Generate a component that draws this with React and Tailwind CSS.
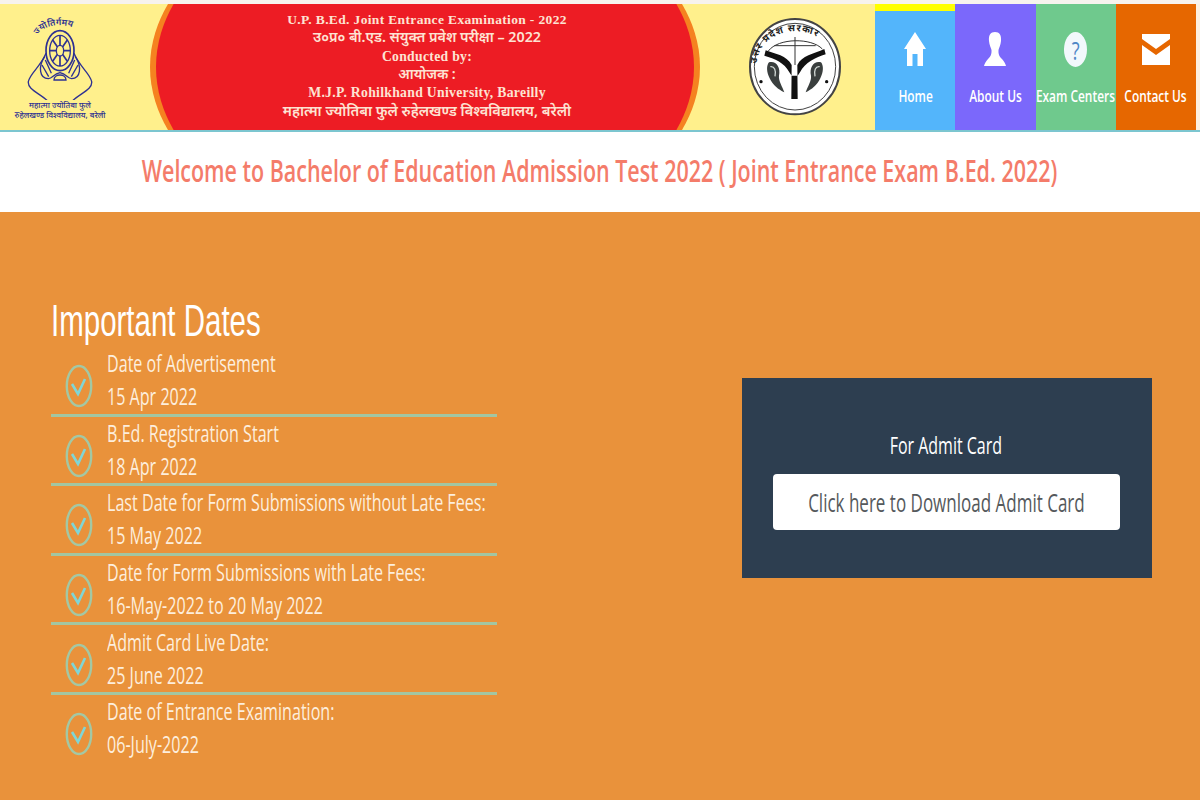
import React from 'react';

const DATES = [
  ['Date of Advertisement', '15 Apr 2022'],
  ['B.Ed. Registration Start', '18 Apr 2022'],
  ['Last Date for Form Submissions without Late Fees:', '15 May 2022'],
  ['Date for Form Submissions with Late Fees:', '16-May-2022 to 20 May 2022'],
  ['Admit Card Live Date:', '25 June 2022'],
  ['Date of Entrance Examination:', '06-July-2022'],
];

function HomeIcon() {
  return (
    <svg width="22" height="35" viewBox="0 0 22 35" fill="#fff">
      <path d="M11 0 L22 17 H19 V34 H13.5 V22 H8.5 V34 H3 V17 H0 Z" />
    </svg>
  );
}

function UserIcon() {
  return (
    <svg width="22" height="35" viewBox="0 0 22 35" fill="#fff">
      <path d="M11 0 C15.5 0 17.5 3 17 9 C16.7 13 15 16 14.5 18 C14.3 22 15 24 18 27 C20 29 21.5 32 22 34 H0 C0.5 32 2 29 4 27 C7 24 7.7 22 7.5 18 C7 16 5.3 13 5 9 C4.5 3 6.5 0 11 0 Z" />
    </svg>
  );
}

function QuestionIcon() {
  return (
    <div className="w-[23px] h-[35px] rounded-[50%] bg-[#f2f8fc] flex items-center justify-center text-[#4f86c6] text-[26px] leading-none">
      <span className="scale-x-[0.7]">?</span>
    </div>
  );
}

function MailIcon() {
  return (
    <svg width="28" height="31" viewBox="0 0 28 31" fill="#fff">
      <path d="M0 0 H28 V5 L14 15 L0 5 Z" />
      <path d="M0 11 L14 21 L28 11 V31 H0 Z" />
    </svg>
  );
}

const MENU = [
  { label: 'Home', bg: 'bg-[#53b5fb]', icon: <HomeIcon />, active: true },
  { label: 'About Us', bg: 'bg-[#7b68fb]', icon: <UserIcon /> },
  { label: 'Exam Centers', bg: 'bg-[#6fc98d]', icon: <QuestionIcon /> },
  { label: 'Contact Us', bg: 'bg-[#e66700]', icon: <MailIcon /> },
];

function UniversityLogo() {
  return (
    <div className="w-[100px] h-full pt-[6px] flex flex-col items-center text-[#2e3192]">
      <svg width="100" height="90" viewBox="0 0 300 270" fill="none" stroke="#2e3192" className="shrink-0">
        <path id="logoArc" d="M84 78 C95 35 205 35 216 78" stroke="none" />
        <text fontSize="27" fontWeight="600" fill="#2e3192" stroke="none" fontFamily="'Noto Sans', sans-serif">
          <textPath href="#logoArc" startOffset="2%">ज्योतिर्गमय</textPath>
        </text>
        <ellipse cx="150" cy="122" rx="42" ry="60" strokeWidth="5" />
        <ellipse cx="150" cy="122" rx="31" ry="46" strokeWidth="4" />
        <path d="M150 76 V168 M119 122 H181 M128 90 L172 154 M172 90 L128 154" strokeWidth="5" />
        <ellipse cx="150" cy="122" rx="11" ry="16" fill="#fff08c" strokeWidth="4" />
        <path d="M108 130 C92 170 60 190 55 215 C52 240 92 250 115 275" strokeWidth="4" />
        <path d="M192 130 C208 170 240 190 245 215 C248 240 208 250 185 275" strokeWidth="4" />
        <path d="M104 140 C84 170 88 205 115 206 C128 206 130 192 150 188 C170 192 172 206 185 206 C212 205 216 170 196 140" strokeWidth="4" />
        <path d="M96 165 L116 200 M106 150 L124 190 M204 165 L184 200 M194 150 L176 190" strokeWidth="4" />
        <path d="M132 210 C132 190 168 190 168 210 Z" strokeWidth="4" />
      </svg>
      <div className="text-[8px] leading-[10px] font-medium font-['Noto_Sans','Liberation_Sans',sans-serif] text-center whitespace-nowrap">
        <div>महात्मा ज्योतिबा फुले</div>
        <div>रुहेलखण्ड विश्वविद्यालय, बरेली</div>
      </div>
    </div>
  );
}

function StateSeal() {
  return (
    <svg width="100" height="105" viewBox="0 0 300 315">
      <ellipse cx="150" cy="155" rx="135" ry="143" fill="#fff" stroke="#444" strokeWidth="6" />
      <ellipse cx="150" cy="155" rx="122" ry="130" fill="none" stroke="#444" strokeWidth="3" />
      <path id="sealArc" d="M35 150 C40 15 260 15 268 150" fill="none" />
      <text fontSize="29" fontWeight="700" letterSpacing="3" fill="#222" fontFamily="'Noto Sans', sans-serif">
        <textPath href="#sealArc" startOffset="1%">उत्तर प्रदेश सरकार</textPath>
      </text>
      <path d="M70 108 C100 68 200 68 232 102 M150 66 V150 M88 92 L212 92" fill="none" stroke="#333" strokeWidth="3" />
      <g fill="#3a3f3e">
        <path d="M72 142 C92 136 108 156 102 182 C100 198 112 214 118 232 C100 224 84 210 74 190 C64 170 64 152 72 142 Z" />
        <path d="M228 142 C208 136 192 156 198 182 C200 198 188 214 182 232 C200 224 216 210 226 190 C236 170 236 152 228 142 Z" />
      </g>
      <path d="M76 155 C88 153 94 166 90 184 M224 155 C212 153 206 166 210 184" fill="none" stroke="#cfd6d2" strokeWidth="4" />
      <path d="M62 106 C90 116 126 122 140 150 L139 252 H158 L157 150 C170 122 206 116 238 102 L242 118 C212 128 180 142 165 172 L158 182 H140 L133 172 C118 142 90 132 58 122 Z" fill="#111" />
      <circle cx="48" cy="200" r="5" fill="#111" />
      <circle cx="245" cy="200" r="5" fill="#111" />
    </svg>
  );
}

function Banner() {
  return (
    <div className="relative flex-1 h-full overflow-hidden bg-[#fff08c] flex items-start pl-[10px]">
      <UniversityLogo />
      <div className="absolute left-[150px] top-[-114px] w-[550px] h-[354px] rounded-[50%] bg-[#f58220]" />
      <div className="absolute left-[156px] top-[-114px] w-[538px] h-[354px] rounded-[50%] bg-[#ed1c24]" />
      <div className="absolute left-[267px] top-[7px] w-[320px] text-center text-[#fde3d3] font-bold leading-[18px] whitespace-nowrap font-['Liberation_Serif','Noto_Sans',serif]">
        <div className="text-[13.5px] tracking-[0.35px]">U.P. B.Ed. Joint Entrance Examination - 2022</div>
        <div className="mt-[-1px] text-[14.3px] font-['Noto_Sans',serif] font-semibold">उ०प्र० बी.एड. संयुक्त प्रवेश परीक्षा – 2022</div>
        <div className="mt-[2px] text-[13.7px] tracking-[0.3px]">Conducted by:</div>
        <div className="mt-[-1px] text-[14px] font-['Noto_Sans',serif] font-semibold">आयोजक :</div>
        <div className="mt-[1px] text-[13.7px] tracking-[0.3px]">M.J.P. Rohilkhand University, Bareilly</div>
        <div className="mt-[-1px] text-[14.5px] font-['Noto_Sans',serif] font-semibold">महात्मा ज्योतिबा फुले रुहेलखण्ड विश्वविद्यालय, बरेली</div>
      </div>
      <div className="absolute left-[745px] top-[11px]">
        <StateSeal />
      </div>
    </div>
  );
}

function Menu() {
  return (
    <nav className="flex h-full shrink-0 mr-[4px]">
      {MENU.map((m) => (
        <a
          key={m.label}
          className={`w-[80.25px] h-full flex flex-col items-center ${m.bg} ${m.active ? 'border-t-[7px] border-[#ffff00] pt-[21px]' : 'pt-[28px]'}`}
        >
          <div className="h-[35px] flex items-center justify-center">{m.icon}</div>
          <span className="mt-[17px] text-white text-[17px] leading-[24px] font-semibold whitespace-nowrap scale-x-[0.7]">
            {m.label}
          </span>
        </a>
      ))}
    </nav>
  );
}

function CheckCircle() {
  return (
    <svg width="28" height="44" viewBox="0 0 28 44" fill="none" className="shrink-0 mt-[12px]">
      <ellipse cx="14" cy="22" rx="12.2" ry="20" stroke="#a3c8a4" strokeWidth="2.4" />
      <path d="M7 20 L13 30 L20 15" stroke="#7fd6d6" strokeWidth="2.6" />
    </svg>
  );
}

function DateRow({ title, date, last }) {
  return (
    <li className={`h-[69.6px] flex items-center pl-[14px] border-b-[3px] ${last ? 'border-transparent' : 'border-[#a2c6a2]'}`}>
      <CheckCircle />
      <div className="ml-[14px] text-[#fdeedd] text-[23px] leading-[33px] whitespace-nowrap">
        <div className="origin-left scale-x-[0.7]">{title}</div>
        <div className="origin-left scale-x-[0.7]">{date}</div>
      </div>
    </li>
  );
}

export default function App() {
  return (
    <div className="w-[1200px] h-[800px] overflow-hidden bg-white font-['Open_Sans',sans-serif]">
      <div className="h-[4px] bg-[#f7f3ee]" />
      <header className="h-[128px] flex bg-[#fdf0e0] border-b-[2px] border-[#7cc6d0]">
        <Banner />
        <Menu />
      </header>
      <div className="h-[80px] pb-[4px] flex items-center justify-center bg-white">
        <h2 className="text-[#f47c6a] text-[31px] font-semibold leading-none whitespace-nowrap scale-x-[0.692]">
          Welcome to Bachelor of Education Admission Test 2022 ( Joint Entrance Exam B.Ed. 2022)
        </h2>
      </div>
      <main className="h-[588px] bg-[#e9923b] flex items-start pl-[51px]">
        <section className="w-[446px] pt-[82px]">
          <h1 className="text-white text-[44px] leading-[53px] font-['Liberation_Sans',sans-serif] origin-left scale-x-[0.67] whitespace-nowrap">
            Important Dates
          </h1>
          <ul>
            {DATES.map(([title, date], i) => (
              <DateRow key={title} title={title} date={date} last={i === DATES.length - 1} />
            ))}
          </ul>
        </section>
        <section className="ml-[245px] mt-[166px] w-[410px] h-[200px] bg-[#2d3e50] flex flex-col items-center pt-[52px]">
          <div className="text-white text-[23px] leading-[30px] font-medium scale-x-[0.695] mr-[2px] whitespace-nowrap">For Admit Card</div>
          <button className="mt-[14px] mr-[2px] w-[347px] h-[56px] bg-white rounded-[4px] text-[#55595c] text-[26px] whitespace-nowrap flex items-center justify-center">
            <span className="shrink-0 scale-x-[0.654]">Click here to Download Admit Card</span>
          </button>
        </section>
      </main>
    </div>
  );
}
